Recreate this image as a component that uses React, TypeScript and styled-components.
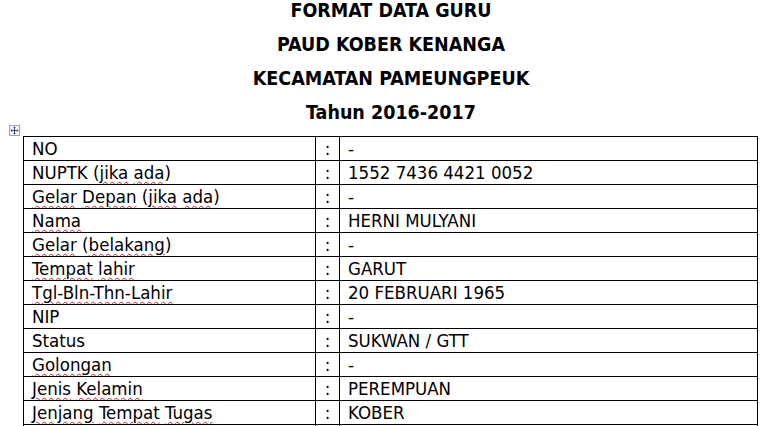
import React from "react";
import styled, { createGlobalStyle } from "styled-components";

const GlobalStyle = createGlobalStyle`
  html, body {
    margin: 0;
    padding: 0;
    background: #ffffff;
  }
  body {
    font-family: "DejaVu Sans Condensed", "DejaVu Sans", Tahoma, sans-serif;
    font-stretch: condensed;
    color: #000000;
    overflow: hidden;
  }
`;

const Page = styled.div`
  width: 778px;
  height: 426px;
  overflow: hidden;
  display: flex;
  flex-direction: column;
`;

const Header = styled.header`
  margin-top: -6px;
  display: flex;
  flex-direction: column;
  align-items: center;
  padding-left: 4px;
`;

const TitleLine = styled.div`
  font-weight: bold;
  font-size: 19.5px;
  line-height: 34px;
  white-space: nowrap;
`;

const TableArea = styled.div`
  position: relative;
  margin-top: 6px;
  margin-left: 23px;
  width: 734px;
`;

const MoveHandle = styled.div`
  position: absolute;
  left: -14px;
  top: -11px;
  width: 11px;
  height: 11px;
  display: flex;
`;

const DataTable = styled.table`
  border-collapse: collapse;
  table-layout: fixed;
  width: 734px;
  font-size: 18.5px;
`;

const Row = styled.tr`
  height: 24px;
`;

const Cell = styled.td<{ $align?: "left" | "center" }>`
  border: 1px solid #000000;
  padding: 0 0 0 8px;
  height: 23px;
  line-height: 23px;
  white-space: nowrap;
  overflow: hidden;
  text-align: ${(p) => p.$align ?? "left"};
  ${(p) => (p.$align === "center" ? "padding: 0;" : "")}
`;

const Misspelled = styled.span`
  text-decoration-line: underline;
  text-decoration-style: wavy;
  text-decoration-color: #e8141c;
  text-decoration-thickness: 1.3px;
  text-underline-offset: 2px;
`;

type Word = { text: string; wrong?: boolean };

const w = (text: string, wrong = false): Word => ({ text, wrong });

const rows: { label: Word[]; value: string }[] = [
  { label: [w("NO")], value: "-" },
  { label: [w("NUPTK ("), w("jika", true), w(" "), w("ada", true), w(")")], value: "1552 7436 4421 0052" },
  {
    label: [w("Gelar", true), w(" "), w("Depan", true), w(" ("), w("jika", true), w(" "), w("ada", true), w(")")],
    value: "-",
  },
  { label: [w("Nama", true)], value: "HERNI MULYANI" },
  { label: [w("Gelar", true), w(" ("), w("belakang", true), w(")")], value: "-" },
  { label: [w("Tempat", true), w(" "), w("lahir", true)], value: "GARUT" },
  { label: [w("Tgl-Bln-Thn-Lahir", true)], value: "20 FEBRUARI 1965" },
  { label: [w("NIP")], value: "-" },
  { label: [w("Status")], value: "SUKWAN / GTT" },
  { label: [w("Golongan", true)], value: "-" },
  { label: [w("Jenis", true), w(" "), w("Kelamin", true)], value: "PEREMPUAN" },
  { label: [w("Jenjang", true), w(" "), w("Tempat", true), w(" "), w("Tugas", true)], value: "KOBER" },
  { label: [w("")], value: "" },
];

const HandleIcon = () => (
  <svg width="11" height="11" viewBox="0 0 11 11">
    <rect x="0.5" y="0.5" width="10" height="10" fill="#f4f6fa" stroke="#9aa4b8" />
    <path d="M5.5 2v7M2 5.5h7" stroke="#2a4a80" strokeWidth="1" />
    <path d="M5.5 1.5l-1.5 1.5h3z M5.5 9.5l-1.5 -1.5h3z M1.5 5.5l1.5 -1.5v3z M9.5 5.5l-1.5 -1.5v3z" fill="#2a4a80" />
  </svg>
);

export default function App() {
  return (
    <Page>
      <GlobalStyle />
      <Header>
        <TitleLine>FORMAT DATA GURU</TitleLine>
        <TitleLine>PAUD KOBER KENANGA</TitleLine>
        <TitleLine>KECAMATAN PAMEUNGPEUK</TitleLine>
        <TitleLine>Tahun 2016-2017</TitleLine>
      </Header>
      <TableArea>
        <MoveHandle>
          <HandleIcon />
        </MoveHandle>
        <DataTable>
          <colgroup>
            <col style={{ width: 292 }} />
            <col style={{ width: 24 }} />
            <col style={{ width: 418 }} />
          </colgroup>
          <tbody>
            {rows.map((r, i) => (
              <Row key={i}>
                <Cell>
                  {r.label.map((part, j) =>
                    part.wrong ? <Misspelled key={j}>{part.text}</Misspelled> : <React.Fragment key={j}>{part.text}</React.Fragment>
                  )}
                </Cell>
                <Cell $align="center">{i < rows.length - 1 ? ":" : ""}</Cell>
                <Cell>{r.value}</Cell>
              </Row>
            ))}
          </tbody>
        </DataTable>
      </TableArea>
    </Page>
  );
}
